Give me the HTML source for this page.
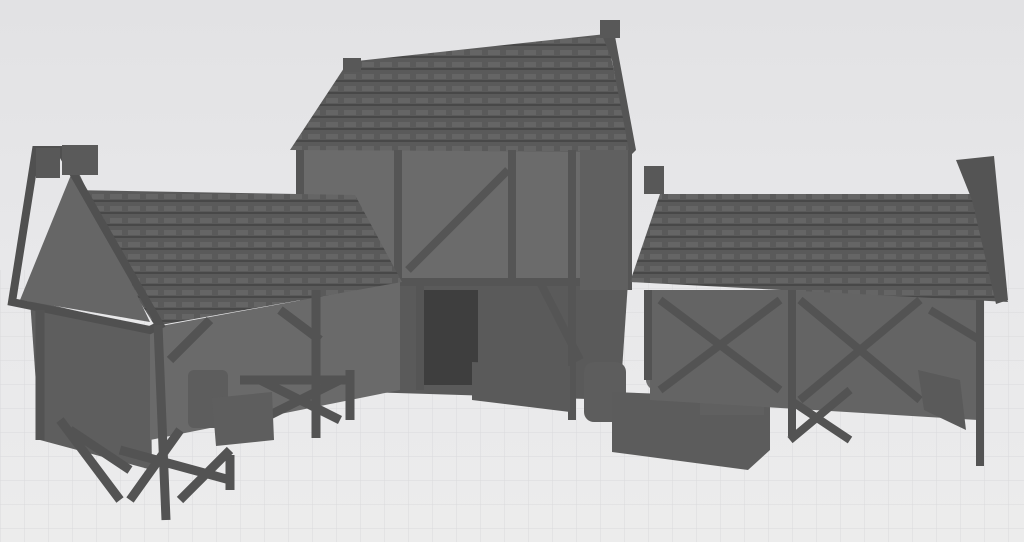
<!DOCTYPE html>
<html><head><style>
html,body{margin:0;padding:0;width:1024px;height:542px;overflow:hidden;background:#e6e6e8;}
svg{display:block}
</style></head><body>
<svg width="1024" height="542" viewBox="0 0 1024 542" xmlns="http://www.w3.org/2000/svg">
<defs>
<linearGradient id="bg" x1="0" y1="0" x2="0" y2="1">
<stop offset="0" stop-color="#e2e2e4"/><stop offset="0.5" stop-color="#e8e8ea"/><stop offset="1" stop-color="#ececec"/>
</linearGradient>
<pattern id="roofL" width="18" height="12" patternUnits="userSpaceOnUse">
<rect width="18" height="12" fill="#5a5a5a"/><rect x="2" y="2" width="12" height="5" fill="#656565"/><rect x="0" y="8" width="18" height="2" fill="#484848"/>
</pattern>
<pattern id="grid" width="24" height="24" patternUnits="userSpaceOnUse">
<path d="M0 0H24M0 0V24" stroke="#d6d6d8" stroke-width="1" fill="none"/>
</pattern>
</defs>
<rect width="1024" height="542" fill="url(#bg)"/>
<rect y="270" width="1024" height="272" fill="url(#grid)" opacity="0.8"/>
<!-- middle building -->
<polygon points="296,150 632,150 628,282 300,282" fill="#6b6b6b"/>
<polygon points="300,282 628,282 620,400 300,390" fill="#5a5a5a"/>
<rect x="418" y="290" width="60" height="95" fill="#3e3e3e"/>
<polygon points="290,150 348,62 606,34 632,152" fill="url(#roofL)"/>
<polygon points="600,30 612,20 636,150 630,156 612,60" fill="#555"/>
<rect x="600" y="20" width="20" height="18" fill="#585858"/>
<rect x="343" y="58" width="18" height="14" fill="#585858"/>
<g stroke="#555" stroke-width="8" fill="none">
<path d="M300 150V282M398 150V282M512 150V282M572 150V420M628 150V290M408 270L508 170M300 282H628M420 282V390M540 282L580 360"/>
</g>
<rect x="580" y="150" width="48" height="140" fill="#606060"/>
<!-- crates/barrels center -->
<polygon points="472,362 570,366 570,412 472,400" fill="#5a5a5a"/>
<rect x="584" y="362" width="42" height="60" rx="10" fill="#5d5d5d"/>
<polygon points="612,392 770,398 770,450 748,470 612,452" fill="#5c5c5c"/>
<rect x="700" y="365" width="64" height="50" fill="#606060"/>
<ellipse cx="668" cy="380" rx="22" ry="14" fill="#707070"/>
<!-- right building -->
<polygon points="650,290 982,290 978,420 650,400" fill="#646464"/>
<polygon points="630,282 660,194 972,194 1008,302" fill="url(#roofL)"/>
<polygon points="956,160 994,156 1008,300 996,304 972,200" fill="#545454"/>
<rect x="644" y="166" width="20" height="28" fill="#585858"/>
<g stroke="#535353" stroke-width="8" fill="none">
<path d="M648 290V380M792 290V436M980 300V466M800 300L920 400M920 300L800 400M660 300L780 390M780 300L660 390M790 400L850 440M850 390L790 440M930 310L980 340"/>
</g>
<polygon points="918,370 960,380 966,430 924,410" fill="#5a5a5a"/>
<!-- left building -->
<polygon points="30,300 150,328 152,470 40,440" fill="#5e5e5e"/>
<polygon points="150,328 400,282 400,390 150,440" fill="#6a6a6a"/>
<polygon points="70,190 355,195 402,282 155,326" fill="url(#roofL)"/>
<polygon points="20,300 75,165 150,322" fill="#666"/>
<polygon points="36,150 60,150 160,325 150,330 12,302" fill="none" stroke="#505050" stroke-width="8"/>
<rect x="36" y="148" width="24" height="30" fill="#585858"/>
<rect x="62" y="145" width="36" height="30" fill="#5a5a5a"/>
<g stroke="#535353" stroke-width="9" fill="none">
<path d="M40 310V440M158 325L166 520M316 290V438M170 360L210 320M280 310L320 340M120 450L230 480M70 430L130 470M60 420L120 500M130 500L180 430M180 500L230 450M230 455V490M240 380L350 380M260 420L340 380M260 380L340 420M350 370V420"/>
</g>
<rect x="188" y="370" width="40" height="58" rx="6" fill="#5d5d5d"/>
<polygon points="212,398 272,392 274,440 216,446" fill="#5e5e5e"/>
</svg>
</body></html>
